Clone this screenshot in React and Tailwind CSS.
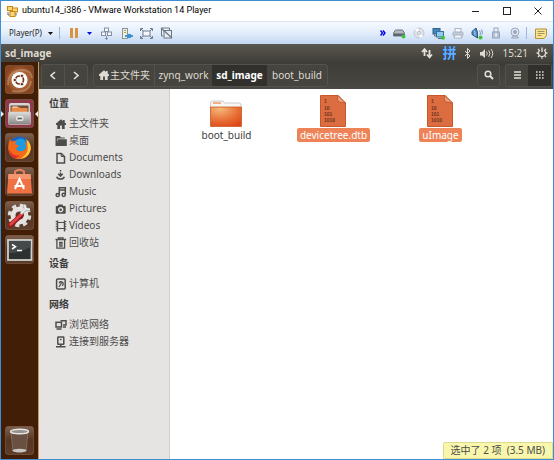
import React from "react";

const HomeIcon = () => (
  <svg width="12" height="12" viewBox="0 0 12 12" fill="currentColor" aria-hidden="true">
    <path d="M6 1.300 1 5.500v1.400h1.300V11h2.800V7.500h1.800V11h2.800V6.900H11V5.500L9.700 4.400V2H8v1z" />
  </svg>
);
const FolderIcon = () => (
  <svg width="12" height="12" viewBox="0 0 12 12" fill="currentColor" aria-hidden="true">
    <path d="M.5 1H5l.8 1.400h4V3.500H2.400V9L1.200 11H.5z" />
    <path d="M3 4.300h8.800V11H1z" />
  </svg>
);
const DocIcon = () => (
  <svg width="12" height="12" viewBox="0 0 12 12" fill="none" stroke="currentColor" strokeWidth="1.500" aria-hidden="true">
    <path d="M2 1.500h4.300L9.500 4.500v6.500H2z" />
    <path d="M6.200 1.500v3h3" strokeWidth="1" />
  </svg>
);
const DownIcon = () => (
  <svg width="12" height="12" viewBox="0 0 12 12" fill="none" stroke="currentColor" strokeWidth="1.500" aria-hidden="true">
    <path d="M5.500 1v1.500M5.500 3.500V7M3.200 4.800l2.300 2.300 2.300-2.300M1.700 7.700c.8 3 6.800 3 7.600 0" />
  </svg>
);
const MusicIcon = () => (
  <svg width="12" height="12" viewBox="0 0 12 12" fill="none" stroke="currentColor" strokeWidth="1.500" aria-hidden="true">
    <path d="M4.300 9V1.800h6V8.500M4.300 4h6" />
    <circle cx="2.700" cy="9" r="1.600" />
    <circle cx="8.700" cy="8.800" r="1.600" />
  </svg>
);
const CameraIcon = () => (
  <svg width="12" height="12" viewBox="0 0 12 12" aria-hidden="true">
    <path fill="currentColor" fillRule="evenodd" d="M3.500 1.500h4L8.300 3H10q.7 0 .7.700V10q0 .7-.7.700H1.500q-.7 0-.7-.7V3.700q0-.7.7-.7h1.300zM5.700 4a2.700 2.700 0 1 0 .01 0z" />
    <circle cx="5.700" cy="6.700" r="1.300" fill="currentColor" />
  </svg>
);
const FilmIcon = () => (
  <svg width="12" height="12" viewBox="0 0 12 12" fill="none" stroke="currentColor" strokeWidth="1" aria-hidden="true">
    <path d="M2.500 .5v11M9.500 .5v11" strokeWidth="1.400" />
    <path d="M3 2.500h6M3 8.500h6M.7 1.500h1.500M.7 4h1.500M.7 6.500h1.500M.7 9h1.500M9.800 1.500h1.500M9.800 4h1.500M9.800 6.500h1.500M9.800 9h1.500" />
  </svg>
);
const BinIcon = () => (
  <svg width="12" height="12" viewBox="0 0 12 12" fill="none" stroke="currentColor" strokeWidth="1.300" aria-hidden="true">
    <path d="M.5 2.500h10.600M3.500 2V.900h4.500V2M1.900 2.500v8.700h7.700V2.500M4 5.500h3.700M4 7.200h3.700M4 9h3.700" />
  </svg>
);
const DiskIcon = () => (
  <svg width="12" height="12" viewBox="0 0 12 12" fill="none" stroke="currentColor" strokeWidth="1.500" aria-hidden="true">
    <rect x="1.600" y="1" width="8.600" height="10" rx="1" />
    <path d="M3.800 8.900 5.800 6.300M4 4.800a2.200 2.200 0 1 1 3 2.900" strokeWidth="1.300" />
    <circle cx="5.800" cy="5.200" r=".8" strokeWidth="1" />
  </svg>
);
const NetIcon = () => (
  <svg width="12" height="12" viewBox="0 0 12 12" fill="none" stroke="currentColor" strokeWidth="1.500" aria-hidden="true">
    <rect x="1" y="3.300" width="5.500" height="4.700" />
    <path d="M1.500 10h5M5.500 1.800h5.500v4.200H8" />
    <path d="M8 8h3" />
  </svg>
);
const ServerIcon = () => (
  <svg width="12" height="12" viewBox="0 0 12 12" fill="none" stroke="currentColor" strokeWidth="1.500" aria-hidden="true">
    <rect x="2.800" y="1" width="6" height="7.300" rx=".5" />
    <path d="M5 3.500h1.500M5.800 8.500v2M1 10.800h9.600" />
  </svg>
);

const sections = [
  {
    title: "位置",
    items: [
      ["主文件夹", HomeIcon],
      ["桌面", FolderIcon],
      ["Documents", DocIcon],
      ["Downloads", DownIcon],
      ["Music", MusicIcon],
      ["Pictures", CameraIcon],
      ["Videos", FilmIcon],
      ["回收站", BinIcon],
    ],
  },
  { title: "设备", items: [["计算机", DiskIcon]] },
  {
    title: "网络",
    items: [
      ["浏览网络", NetIcon],
      ["连接到服务器", ServerIcon],
    ],
  },
];

function TitleBar() {
  return (
    <header className="flex h-5 shrink-0 items-center bg-white pl-[6px] text-[9px] text-black">
      <svg width="11" height="11" viewBox="0 0 11 11" aria-hidden="true">
        <g fill="#fbd77a" stroke="#c98a12" strokeWidth="1">
          <rect x=".5" y=".5" width="5" height="4" />
          <rect x="5.500" y="2" width="5" height="4" />
          <rect x="3" y="5.500" width="5" height="5" />
        </g>
        <path d="M1 6v3h1.500M9 7v2.500" stroke="#666" fill="none" />
      </svg>
      <h1 className="ml-1 flex-1 whitespace-nowrap [font-family:Roboto,'Noto_Sans',sans-serif]">ubuntu14_i386 - VMware Workstation 14 Player</h1>
      <div className="flex">
        <button aria-label="Minimize" className="grid h-5 w-[31px] place-items-center">
          <svg width="8" height="8"><path d="M0 4.500h7" stroke="#222" /></svg>
        </button>
        <button aria-label="Maximize" className="grid h-5 w-[31px] place-items-center">
          <svg width="8" height="8"><rect x=".5" y=".5" width="7" height="7" stroke="#222" fill="none" /></svg>
        </button>
        <button aria-label="Close" className="grid h-5 w-[31px] place-items-center">
          <svg width="8" height="8"><path d="m.5.5 7 7m0-7-7 7" stroke="#222" /></svg>
        </button>
      </div>
    </header>
  );
}

function PlayerBar() {
  const tool = "grid h-5 w-5 place-items-center";
  return (
    <div className="flex h-[23px] shrink-0 items-center justify-between border-t border-[#dbe4f0] bg-linear-to-b from-[#f6faff] via-[#e3edfb] to-[#c3d7f1] pr-[6px] pl-2 text-[8px] text-[#222]">
      <div className="flex items-center">
        <button className="flex items-center gap-[6px]">
          Player(P)
          <svg width="5" height="3"><path d="M0 0h5L2.500 3z" fill="#111" /></svg>
        </button>
        <span className="ml-[6px] h-3 w-px bg-[#9cb6dc]" />
        <button aria-label="Pause" className="ml-[9px] flex items-center gap-2">
          <svg width="10" height="10"><path d="M1 0h3v10H1zM6 0h3v10H6z" fill="#dc9340" /></svg>
          <svg width="5" height="3"><path d="M0 0h5L2.500 3z" fill="#0010dc" /></svg>
        </button>
        <div className="ml-[5px] flex">
          <button aria-label="Send Ctrl+Alt+Del" className={tool}>
            <svg width="13" height="13" viewBox="0 0 13 13" fill="#f7f9fc" stroke="#8390a4">
              <rect x="4.500" y="1" width="4" height="3.500" /><rect x="1.500" y="5" width="4" height="3.500" /><rect x="7.500" y="5" width="4" height="3.500" />
              <path d="M6.500 9v3.500M5 11l1.500 1.500L8 11" fill="none" />
            </svg>
          </button>
          <button aria-label="Removable devices" className={tool}>
            <svg width="13" height="13" viewBox="0 0 13 13">
              <rect x="2.500" y="1.500" width="5" height="10" fill="#eef0df" stroke="#8a949c" />
              <path d="M4 3.500h2M4 5.500h2" stroke="#b3a24c" />
              <path d="M5 9h3M11 9h2" stroke="#2778bb" strokeWidth="1.500" /><circle cx="9.300" cy="9" r="2.300" fill="#3a92d4" />
            </svg>
          </button>
          <button aria-label="Full screen" className={tool}>
            <svg width="13" height="11" viewBox="0 0 13 11" fill="none" stroke="#6e7c91">
              <path d="M.5 3V.500H3M10 .5h2.500V3M12.500 8v2.500H10M3 10.500H.500V8M1 1l2 2M12 1l-2 2M12 10l-2-2M1 10l2-2" />
              <rect x="3" y="3" width="7" height="5" fill="#f5f8fc" />
            </svg>
          </button>
          <button aria-label="Unity" className={tool}>
            <svg width="13" height="12" viewBox="0 0 13 12" fill="none" stroke="#6e7885">
              <path d="M1.500 1h8v2M1.500 1v8h2" /><rect x="4" y="3.500" width="7.500" height="7.500" fill="#e8edf3" />
              <path d="m1 1 11 10" strokeWidth="1.300" />
            </svg>
          </button>
        </div>
      </div>
      <div className="flex items-center">
        <button aria-label="More devices" className="mr-[4px]">
          <svg width="6" height="6" viewBox="0 0 6 6" fill="none" stroke="#0000f0" strokeWidth="1.400"><path d="m.5.5 2 2.500-2 2.500M3 .5 5 3 3 5.500" /></svg>
        </button>
        <div className="flex">
          <button aria-label="Hard disk" className="grid h-5 w-[19px] place-items-center">
            <svg width="13" height="12" viewBox="0 0 13 12"><path d="M2.500 3h7l2 3v3H.500V6z" fill="#b3b8be" stroke="#707780" /><path d="M1 6.500h10V9H1z" fill="#5d646d" /><circle cx="10.500" cy="9.500" r="2" fill="#3fc13c" /></svg>
          </button>
          <button aria-label="CD/DVD" className="grid h-5 w-[19px] place-items-center">
            <svg width="12" height="12" viewBox="0 0 12 12"><circle cx="6" cy="6" r="5" fill="#dfe4ea" stroke="#c0c8d3" /><path d="M6 6 2 3a5 5 0 0 1 3-2zM6 6l4 3a5 5 0 0 1-3 2z" fill="#fff" /><circle cx="6" cy="6" r="1.500" fill="#fafafa" stroke="#b1b9c4" /></svg>
          </button>
          <button aria-label="Network adapter" className="grid h-5 w-5 place-items-center">
            <svg width="13" height="13" viewBox="0 0 13 13"><rect x="1" y="1.500" width="7" height="5.500" fill="#3d86c0" stroke="#39617f" /><rect x="4.500" y="4.500" width="7" height="5.500" fill="#8fc9ee" stroke="#39729b" /><path d="M2.500 7.500V9h2M6 11.500h4" stroke="#5b6f80" fill="none" /><circle cx="11" cy="10.800" r="2" fill="#3fc13c" /></svg>
          </button>
          <button aria-label="Printer" className="grid h-5 w-[19px] place-items-center">
            <svg width="12" height="12" viewBox="0 0 12 12" stroke="#a9b4c4"><rect x="3" y="1.500" width="6" height="4" fill="#f5f7fa" /><rect x="1" y="5" width="10" height="4" rx="1" fill="#c2cad6" /><path d="M3 8h6l1 3H2z" fill="#f5f7fa" /></svg>
          </button>
          <button aria-label="Sound card" className="grid h-5 w-[19px] place-items-center">
            <svg width="12" height="13" viewBox="0 0 12 13"><path d="M1 4.500 5 1q2 3 1.500 10L1 7.500z" fill="#4d8bc4" stroke="#2c5580" /><path d="M3 3.500q1.500 2 1 5" stroke="#b9d8f0" fill="none" /><path d="M8.500 3.500q1.500 2 .5 4.500M10.500 2.500q1.500 3 .5 5" stroke="#6d95ba" fill="none" /><circle cx="9.500" cy="10.500" r="2" fill="#3fc13c" /></svg>
          </button>
          <button aria-label="USB device" className="grid h-5 w-[19px] place-items-center">
            <svg width="10" height="12" viewBox="0 0 10 12" stroke="#97a7c0"><rect x="3" y="1" width="4" height="4" fill="#eef3fa" /><rect x="1.500" y="5" width="7" height="6" fill="#b2c0d6" /><path d="M5 6v4M4 8h2" stroke="#fff" /></svg>
          </button>
          <button aria-label="Webcam" className="grid h-5 w-[19px] place-items-center">
            <svg width="12" height="12" viewBox="0 0 12 12" stroke="#9daabd"><circle cx="6" cy="5" r="4" fill="#dce5f0" /><circle cx="6" cy="5" r="1.500" fill="#8cabd1" /><path d="M2.500 11h7L8 9H4z" fill="#c6cfdb" /></svg>
          </button>
        </div>
        <span className="ml-[2px] h-3 w-px bg-[#9cb6dc]" />
        <button aria-label="Messages" className="ml-2">
          <svg width="12" height="11" viewBox="0 0 12 11"><path d="M.5 1h11v6.500l-2.500 3H.500z" fill="#f8e491" /><path d="M.5 10.500V1h11v6.500l-2.500 3z" fill="none" stroke="#b4923a" /><path d="M2.500 3.500h7M2.500 5.500h7M2.500 7.500h4" stroke="#a3935c" /></svg>
        </button>
      </div>
    </div>
  );
}

function MenuPanel() {
  return (
    <div className="flex h-[18px] shrink-0 items-center justify-between bg-linear-to-b from-[#59574f] to-[#413f39] pr-[5px] pl-1 text-[10px] text-[#dfdbd2]">
      <strong>sd_image</strong>
      <div className="flex items-center">
        <svg width="12" height="12" viewBox="0 0 12 12" fill="none" stroke="#e4e0d8" strokeWidth="1.800" aria-label="Network"><path d="M3.500 9V2.500M1 5l2.500-2.800L6 5M8.500 3v7M6 7.500l2.500 2.800L11 7.500" /></svg>
        <span className="ml-[9px] text-[14px] leading-none font-bold text-[#62aeff] [text-shadow:0_0_1px_#0b3b9b]">拼</span>
        <svg className="ml-2" width="7" height="11" viewBox="0 0 7 11" fill="none" stroke="#dfdbd2" aria-label="Bluetooth"><path d="m1 3 5 5-2.500 2.500v-10L6 3 1 8" /></svg>
        <svg className="ml-2" width="15" height="11" viewBox="0 0 15 11" aria-label="Volume"><path d="M1 4h2l3-3v9L3 7.500H1z" fill="#dfdbd2" /><path d="M7.500 3.500q1.500 2 0 4M9.700 2.300q2.500 3.200 0 6.400M12 1q3.500 4.500 0 9" fill="none" stroke="#dfdbd2" /></svg>
        <time className="ml-2">15:21</time>
        <svg className="ml-2" width="12" height="12" viewBox="0 0 12 12" fill="none" stroke="#dfdbd2" strokeWidth="1.400" aria-label="Session"><path d="M4 3a3.600 3.600 0 1 0 4 0M6 .5V5M.5 6H2M10 6h1.500M2 10l1-1M10 10 9 9M6 10v1.700M2 2l1 1M10 2 9 3" /></svg>
      </div>
    </div>
  );
}

const TileGradients = () => (
  <defs>
    <linearGradient id="tile" x2="0" y2="1"><stop stopColor="#7c604d" /><stop offset=".5" stopColor="#563522" /><stop offset="1" stopColor="#5d3e2b" /></linearGradient>
    <radialGradient id="dash"><stop stopColor="#d99a73" /><stop offset=".6" stopColor="#ac653a" /><stop offset="1" stopColor="#86451f" /></radialGradient>
    <linearGradient id="metal" x2="0" y2="1"><stop stopColor="#dededc" /><stop offset="1" stopColor="#868583" /></linearGradient>
  </defs>
);

const launchers = [
  {
    name: "Dash",
    fill: "url(#dash)",
    art: (
      <>
        <path d="M3 20Q3 5 19 5q7 1 8 8M7 26q17 3 19-10" stroke="#ddb294" strokeWidth="2" opacity=".4" fill="none" />
        <circle cx="14.500" cy="15" r="8" fill="#fff" />
        <circle cx="14.500" cy="15" r="4" fill="none" stroke="#6f3211" strokeWidth="1.700" />
        <g fill="#6f3211" stroke="#fff" strokeWidth=".8"><circle cx="9.800" cy="15" r="1.700" /><circle cx="17" cy="10.800" r="1.700" /><circle cx="17" cy="19.200" r="1.700" /></g>
      </>
    ),
  },
  {
    name: "Files",
    fill: "#8e3a4a",
    art: (
      <>
        <path d="M4 6q0-2 2-2h17q2 0 2 2v9H4z" fill="#d7d5d1" />
        <path d="M5.500 6.500h18v7h-18z" fill="#6d4c39" /><path d="M6.500 8h8l1 1h7v4.500h-16z" fill="#e98a45" /><path d="M7.500 7.500h5v1h-5z" fill="#fff" />
        <rect x="3.500" y="13" width="22" height="12.500" rx="1" fill="url(#metal)" stroke="#d1d1ce" strokeWidth=".6" />
        <rect x="11.500" y="17.500" width="6.500" height="4" rx="1" fill="#bcbcba" stroke="#fff" strokeWidth=".7" /><path d="M13 19.500h3.500" stroke="#555" />
      </>
    ),
  },
  {
    name: "Firefox",
    art: (
      <>
        <circle cx="14.500" cy="15" r="11" fill="#f4741c" />
        <path d="M5 9.500Q8 4 14.500 3.500q7 .5 9 6L20 17H9z" fill="#1c63c4" />
        <circle cx="15.500" cy="12" r="6.500" fill="#1b9be0" />
        <path d="M3.500 17C3 13 3.500 9 5 6c.5 1.500 1.300 2.300 2.500 2.500 1.500-1 3-1 4.500-.5-1.500 1-2 2-1.500 3.500l3.500.7c0 1.800-2 2-3 3.300 1 3 5 4 8 2 3.500-2.500 2-6.500 0-8.500 2.500.5 3.500 1.500 4 2.500.2-2-.8-4-2-5 3 1.500 5 5.500 4.700 9-.5 6.500-5.500 10.500-11.500 10.500C8.500 26 4 22.500 3.500 17z" fill="#f4691b" />
        <path d="M21 6.500c3 1.500 5 5.500 4.700 9-.5 6-5 9.500-10 10.300 4-3 7-6 7-10.300 0-4-.5-6.500-1.700-9z" fill="#ffc93c" />
        <path d="M3.500 15c2 5.500 6 8 11 7.500-2 2.500-4 3-6 2.500C5.500 23 3.500 19 3.500 15z" fill="#e5312d" />
      </>
    ),
  },
  {
    name: "Software",
    art: (
      <>
        <path d="M10 8V4.500Q14.500 1 19 4.500V8" fill="none" stroke="#e8805b" strokeWidth="2" />
        <path d="M3.500 7h22l1.500 19.500H2z" fill="#ef7245" /><path d="M3.500 7h22l.5 5H3z" fill="#f49570" />
        <path d="m10 22 4.500-10L19 22M9.500 19h10" fill="none" stroke="#fff" strokeWidth="2" />
      </>
    ),
  },
  {
    name: "Settings",
    art: (
      <>
        <circle cx="14.500" cy="14.500" r="10" fill="none" stroke="#dddcda" strokeWidth="3.500" strokeDasharray="4.200 3.650" />
        <circle cx="14.500" cy="14.500" r="6.500" fill="none" stroke="#e4e3e1" strokeWidth="5" />
        <path d="m5.500 24 11-10" stroke="#9f1719" strokeWidth="5" strokeLinecap="round" />
        <path d="m5.500 23.500 10.500-10" stroke="#e14545" strokeWidth="2.500" strokeLinecap="round" />
        <path d="m16 13 5-5M20 4q-1 5 5 5" fill="none" stroke="#b9b9b9" strokeWidth="3" />
        <path d="m16 12.500 5-5M20 3.500q-1 5 5 5" fill="none" stroke="#f1f1f1" strokeWidth="1.500" />
      </>
    ),
  },
  {
    name: "Terminal",
    art: (
      <>
        <rect x="3" y="5" width="23.500" height="20" fill="#2d3031" stroke="#d0d0cc" strokeWidth="1.800" />
        <path d="M4 6h21.500v6Q15 18 4 18z" fill="#45494b" />
        <path d="m7 9.500 3.500 2.200L7 14M12 15.500h5" fill="none" stroke="#fff" strokeWidth="1.500" />
      </>
    ),
  },
];

function Launcher() {
  return (
    <nav aria-label="Launcher" className="flex w-[38px] shrink-0 flex-col justify-between border-r border-[#c69a5e] bg-[#431e07] pt-[3px] pb-[4px]">
      <ul className="flex flex-col gap-[5px]">
        {launchers.map((l) => (
          <li key={l.name} className="relative flex justify-center">
            <button aria-label={l.name} className="block">
              <svg width="29" height="29" viewBox="0 0 29 29">
                <TileGradients />
                <rect x=".5" y=".5" width="28" height="28" rx="2.500" fill={l.fill || "url(#tile)"} stroke="#9a7963" strokeOpacity=".4" />
                {l.art}
              </svg>
            </button>
            {l.name === "Files" && (
              <svg className="absolute inset-x-0 top-3 w-full" height="6" viewBox="0 0 37 6" preserveAspectRatio="none" fill="#eee"><path d="m0 0 3 3-3 3zM37 0l-3 3 3 3z" /></svg>
            )}
          </li>
        ))}
      </ul>
      <button aria-label="Trash" className="flex justify-center">
        <svg width="29" height="29" viewBox="0 0 29 29">
          <rect x=".5" y=".5" width="28" height="28" rx="2.500" fill="url(#tile)" stroke="#9a7963" strokeOpacity=".4" />
          <path d="m6 6 2 19q6 3 13 0l2-19z" fill="#6a5040" stroke="#8d7a6c" strokeWidth=".7" />
          <ellipse cx="14.500" cy="5.500" rx="9" ry="2.300" fill="#96918e" stroke="#e7e6e4" strokeWidth="1.500" />
          <ellipse cx="14.500" cy="24.500" rx="7" ry="1.800" fill="#c9c7c4" />
        </svg>
      </button>
    </nav>
  );
}

function HeaderBar() {
  const group = "flex h-[23px] overflow-hidden rounded-[3px] border border-[#54524a] bg-[#45443e]";
  return (
    <div className="flex h-[27px] shrink-0 items-center border-b border-[#4a4943] bg-linear-to-b from-[#3d3c37] to-[#494842] pr-px pl-[2px] text-[10px] text-[#dfdbd2]">
      <div className={group}>
        <button aria-label="Back" className="grid w-[23px] place-items-center border-r border-[#54524a]">
          <svg width="6" height="9" fill="none" stroke="#e5e1d9" strokeWidth="1.600"><path d="M5 1 1 4.500 5 8" /></svg>
        </button>
        <button aria-label="Forward" className="grid w-[22px] place-items-center">
          <svg width="6" height="9" fill="none" stroke="#e5e1d9" strokeWidth="1.600"><path d="m1 1 4 3.500L1 8" /></svg>
        </button>
      </div>
      <nav aria-label="Path" className={`${group} ml-[5px] whitespace-nowrap`}>
        <button className="flex w-[61px] items-center justify-center border-r border-[#54524a]"><HomeIcon />主文件夹</button>
        <button className="w-[57px]">zynq_work</button>
        <button className="w-[55px] bg-[#31302c] font-bold text-white">sd_image</button>
        <button className="w-[60px]">boot_build</button>
      </nav>
      <button aria-label="Search" className="ml-auto grid h-[23px] w-[23px] place-items-center rounded-[3px] border border-[#54524a] bg-[#45443e]">
        <svg width="10" height="10" viewBox="0 0 10 10" fill="none" stroke="#e5e1d9"><circle cx="4" cy="4" r="2.800" strokeWidth="1.500" /><path d="m6 6 3 3" strokeWidth="2" /></svg>
      </button>
      <div className={`${group} ml-[5px]`}>
        <button aria-label="List view" className="grid w-[22px] place-items-center">
          <svg width="7" height="8" stroke="#e5e1d9" strokeWidth="1.500"><path d="M0 1h7M0 4h7M0 7h7" /></svg>
        </button>
        <button aria-label="Grid view" className="grid w-[23px] place-items-center bg-[#31302c]">
          <svg width="8" height="8" stroke="#dfdbd2" strokeWidth="1.600" strokeDasharray="1.600 1.400"><path d="M0 1h8M0 4h8M0 7h8" /></svg>
        </button>
      </div>
    </div>
  );
}

function Sidebar() {
  return (
    <aside className="w-[131px] shrink-0 border-r border-[#d0cecb] bg-[#e6e4e2] pt-[3px] text-[10px] text-[#4c4c4c]">
      {sections.map((s) => (
        <section key={s.title} className="pb-px">
          <h2 className="flex h-[23px] items-center pl-[10px] font-bold text-[#3c3c3c]">{s.title}</h2>
          <ul>
            {s.items.map(([label, Icon]) => (
              <li key={label}>
                <a href="#" className="flex h-[17px] items-center gap-[2px] pl-4 whitespace-nowrap">
                  <Icon />
                  {label}
                </a>
              </li>
            ))}
          </ul>
        </section>
      ))}
    </aside>
  );
}

const BinaryFile = () => (
  <svg width="26" height="32" viewBox="0 0 26 32" aria-hidden="true">
    <path d="M.5.500H18L25.500 8v23.500H.500z" fill="#dc6d40" stroke="#c8572c" />
    <path d="M18 .5 25.500 8l-7-1q-2-2-.5-6.500z" fill="#ef9b76" stroke="#ad4a24" strokeWidth=".7" />
    <g fill="#70331b" fontSize="5" fontWeight="bold" fontFamily="Liberation Sans, sans-serif">
      <text x="4" y="8">1</text><text x="4" y="14.500">10</text><text x="4" y="20.500">101</text><text x="4" y="27">1010</text>
    </g>
  </svg>
);
const FolderArt = () => (
  <svg width="32" height="32" viewBox="0 0 32 32" aria-hidden="true">
    <defs><radialGradient id="orange" cx=".3" cy=".1" r="1"><stop stopColor="#f5b879" /><stop offset=".55" stopColor="#e8743a" /><stop offset="1" stopColor="#df4518" /></radialGradient></defs>
    <path d="M.5 12V8q0-2 2-2H13l1.500 2H29q2 0 2 2v5H.500z" fill="#f8f7f5" stroke="#cecbc6" />
    <path d="M3 7h8v2H3z" fill="#f3ae85" />
    <path d="M.5 12h31v19.500H.500z" fill="url(#orange)" stroke="#c95a27" strokeWidth=".8" />
  </svg>
);

function Files() {
  const files = [
    ["boot_build", false],
    ["devicetree.dtb", true],
    ["uImage", true],
  ];
  return (
    <main className="relative flex-1 bg-white pt-[6px] pl-[3px] text-[10px]">
      <ul className="flex">
        {files.map(([name, selected]) => (
          <li key={name} className="flex w-[107px] justify-center">
            <button className="flex flex-col items-center">
              {name === "boot_build" ? <FolderArt /> : <BinaryFile />}
              <span className={`mt-px rounded-[2px] px-[3px] leading-[14px] ${selected ? "bg-[#ee8358] text-white" : "text-[#3c3c3c]"}`}>{name}</span>
            </button>
          </li>
        ))}
      </ul>
      <p className="absolute right-0 bottom-0 flex h-[17px] items-center rounded-tl-[2px] border border-[#dfd98d] bg-[#f9f7ac] px-[7px] whitespace-nowrap text-[#4c4c4c]">选中了 2 项&nbsp; (3.5 MB)</p>
    </main>
  );
}

export default function App() {
  return (
    <div lang="zh-CN" className="flex h-screen flex-col overflow-hidden border border-[#3f8fd5] [font-family:'Noto_Sans','Noto_Sans_CJK_SC',sans-serif]">
      <TitleBar />
      <PlayerBar />
      <MenuPanel />
      <div className="flex min-h-0 flex-1">
        <Launcher />
        <div className="flex min-w-0 flex-1 flex-col">
          <HeaderBar />
          <div className="flex min-h-0 flex-1">
            <Sidebar />
            <Files />
          </div>
        </div>
      </div>
    </div>
  );
}
